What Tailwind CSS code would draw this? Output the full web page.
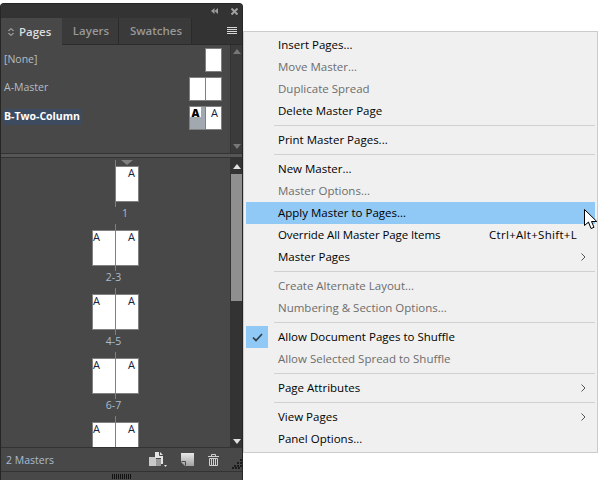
<!DOCTYPE html>
<html lang="en">
<head>
    <meta charset="UTF-8">
    <title>Pages panel menu</title>
    <script src="https://cdn.jsdelivr.net/npm/@tailwindcss/browser@4"></script>
</head>
<body class="bg-white">
<div class="flex w-[601px] h-[482px] items-start overflow-hidden font-['Open_Sans',sans-serif]">

    <!-- Pages panel -->
    <div class="mt-[3px] flex h-[477px] w-[243px] shrink-0 flex-col overflow-hidden rounded-t-[4px] border-x border-t border-[#262626] bg-[#484848]">
        <!-- title bar -->
        <div class="flex h-[14px] shrink-0 items-center justify-end gap-[13px] bg-[#333333] pr-[4px]">
            <svg width="7" height="6" viewBox="0 0 7 6" fill="#9c9c9c"><path d="M3.500 0v6L0 3zM7 0v6L3.500 3z"/></svg>
            <svg width="7" height="7" viewBox="0 0 7 7" stroke="#a0a0a0" stroke-width="2"><path d="M0.500 0.500l6 6M6.500 0.500l-6 6"/></svg>
        </div>
        <!-- tabs -->
        <div class="flex h-[27px] shrink-0 border-b border-[#2b2b2b] bg-[#333333] text-[11.500px] font-semibold">
            <div class="flex h-[27px] w-[61px] items-center gap-[5px] bg-[#484848] pl-[7px] text-[#dcdcdc]">
                <svg width="6" height="10" viewBox="0 0 6 10" fill="none" stroke="#d0d0d0"><path d="M0.500 4L3 1.500 5.500 4M0.500 6L3 8.500 5.500 6"/></svg>
                <span>Pages</span>
            </div>
            <div class="flex w-[57px] items-center justify-center border-r border-[#2b2b2b] bg-[#3a3a3a] pl-[2px] text-[#989898]">Layers</div>
            <div class="flex w-[73px] items-center justify-center border-r border-[#2b2b2b] bg-[#3a3a3a] pl-[2px] text-[#989898]">Swatches</div>
            <div class="flex flex-1 items-center justify-end pr-[5px]">
                <svg width="10" height="8" viewBox="0 0 10 8" fill="#d8d8d8"><path d="M0 0h10v1H0zM0 2h10v1H0zM0 4h10v1H0zM0 6h10v1H0z"/></svg>
            </div>
        </div>

        <!-- masters -->
        <div class="flex h-[108px] shrink-0">
            <div class="flex-1 pl-[3px] pr-[8px] pt-[3px] text-[10.500px]">
                <div class="flex h-[29px] items-start justify-between">
                    <span class="mt-[4px] text-[#b4bcc4]">[None]</span>
                    <div class="h-[24px] w-[17px] border border-[#808080] bg-white"></div>
                </div>
                <div class="flex h-[29px] items-start justify-between">
                    <span class="mt-[3px] text-[#b4bcc4]">A-Master</span>
                    <div class="flex h-[24px] w-[33px] border border-[#808080] bg-white">
                        <div class="w-[16px] border-r border-[#808080]"></div>
                    </div>
                </div>
                <div class="flex h-[29px] items-start justify-between">
                    <span class="mt-[3px] flex h-[16px] w-[78px] items-center whitespace-nowrap bg-[#3d4b60] text-[10.500px] font-bold text-white">B-Two-Column</span>
                    <div class="flex h-[24px] w-[33px] border border-[#808080] bg-white">
                        <div class="h-full w-[16px] border-r border-[#808080] bg-[#a2a8b0]">
                            <div class="flex h-[10px] w-[11px] items-center justify-center bg-white text-[11px] leading-none font-extrabold text-black">A</div>
                        </div>
                        <div class="flex-1 pr-[3px] text-right text-[11px] leading-[12px] font-medium text-[#15233f]">A</div>
                    </div>
                </div>
            </div>
            <!-- scrollbar -->
            <div class="flex w-[12px] flex-col items-center justify-between border-l border-[#333333] bg-[#3b3b3b] py-[4px]">
                <svg width="8" height="5" viewBox="0 0 8 5" fill="#777777"><path d="M4 0l4 5H0z"/></svg>
                <svg width="8" height="5" viewBox="0 0 8 5" fill="#777777"><path d="M4 5l4-5H0z"/></svg>
            </div>
        </div>

        <!-- divider -->
        <div class="h-[5px] shrink-0 border-y border-[#333333] bg-[#565656]"></div>

        <!-- pages -->
        <div class="flex h-[289px] shrink-0">
            <div class="relative flex-1 overflow-hidden pt-[2px] text-[10.500px] text-[#a8bccf]">
                <svg class="absolute left-[120px] top-[2px]" width="12" height="5" viewBox="0 0 12 5" fill="#808080"><path d="M0 0h12L6 5z"/></svg>

                <div class="relative h-[64px] pt-[6px]">
                    <div class="absolute left-[114px] top-0 h-[47px] w-px bg-[#808080]"></div>
                    <div class="ml-[114px] h-[36px] w-[24px] border border-[#808080] bg-white pr-[3px] text-right text-[11px] leading-[12px] font-medium text-[#15233f]">A</div>
                    <div class="ml-[114px] mt-[4px] w-[24px] pr-[4px] text-center leading-[14px]">1</div>
                </div>

                <div class="relative h-[64px] pt-[6px]">
                    <div class="relative ml-[91px] flex h-[36px] w-[47px] justify-between border border-[#808080] bg-white pr-[3px] text-[11px] leading-[12px] font-medium text-[#15233f]"><span>A</span><span>A</span></div>
                    <div class="absolute left-[114px] top-0 h-[47px] w-px bg-[#808080]"></div>
                    <div class="ml-[91px] mt-[4px] w-[47px] pr-[4px] text-center leading-[14px]">2-3</div>
                </div>

                <div class="relative h-[64px] pt-[6px]">
                    <div class="relative ml-[91px] flex h-[36px] w-[47px] justify-between border border-[#808080] bg-white pr-[3px] text-[11px] leading-[12px] font-medium text-[#15233f]"><span>A</span><span>A</span></div>
                    <div class="absolute left-[114px] top-0 h-[47px] w-px bg-[#808080]"></div>
                    <div class="ml-[91px] mt-[4px] w-[47px] pr-[4px] text-center leading-[14px]">4-5</div>
                </div>

                <div class="relative h-[64px] pt-[6px]">
                    <div class="relative ml-[91px] flex h-[36px] w-[47px] justify-between border border-[#808080] bg-white pr-[3px] text-[11px] leading-[12px] font-medium text-[#15233f]"><span>A</span><span>A</span></div>
                    <div class="absolute left-[114px] top-0 h-[47px] w-px bg-[#808080]"></div>
                    <div class="ml-[91px] mt-[4px] w-[47px] pr-[4px] text-center leading-[14px]">6-7</div>
                </div>

                <div class="relative h-[64px] pt-[6px]">
                    <div class="relative ml-[91px] flex h-[36px] w-[47px] justify-between border border-[#808080] bg-white pr-[3px] text-[11px] leading-[12px] font-medium text-[#15233f]"><span>A</span><span>A</span></div>
                    <div class="absolute left-[114px] top-0 h-[47px] w-px bg-[#808080]"></div>
                </div>
            </div>
            <!-- scrollbar -->
            <div class="flex w-[12px] flex-col border-l border-[#333333] bg-[#333333]">
                <div class="flex h-[16px] items-center justify-center">
                    <svg width="8" height="5" viewBox="0 0 8 5" fill="#e0e0e0"><path d="M4 0l4 5H0z"/></svg>
                </div>
                <div class="h-[127px] bg-[#8f8f8f]"></div>
                <div class="flex-1"></div>
                <div class="flex h-[12px] items-center justify-center">
                    <svg width="8" height="5" viewBox="0 0 8 5" fill="#e0e0e0"><path d="M4 5l4-5H0z"/></svg>
                </div>
            </div>
        </div>

        <!-- footer -->
        <div class="flex h-[25px] shrink-0 items-center border-y border-[#333333] pl-[5px] text-[10.500px] text-[#a8bccf]">
            <span class="mt-[3px] w-[48px] shrink-0 whitespace-nowrap">2 Masters</span>
            <svg class="ml-[95px] shrink-0" width="18" height="16" viewBox="0 0 18 16">
                <path d="M0 5h7v9H0z" fill="#c8c8c8"/><path d="M7 7h5v7H7z" fill="#9a9a9a"/>
                <path d="M6 0h5l3 3v9h-2V6H6z" fill="#e4e4e4"/><path d="M10.500 0v3.500h3.500" fill="none" stroke="#484848"/>
                <path d="M15 13h3l-1.500 2z" fill="#e0e0e0"/>
            </svg>
            <svg class="ml-[14px] shrink-0" width="13" height="13" viewBox="0 0 13 13">
                <defs><linearGradient id="pg" x1="0" y1="0" x2="0" y2="1"><stop offset="0" stop-color="#e8e8e8"/><stop offset="1" stop-color="#a0a0a0"/></linearGradient></defs>
                <path d="M0 0h13v13H4L0 9z" fill="url(#pg)"/>
                <path d="M0.500 8.500h4v4" fill="none" stroke="#484848"/>
            </svg>
            <svg class="ml-[14px] shrink-0" width="11" height="13" viewBox="0 0 11 13" fill="none" stroke="#d0d0d0">
                <path d="M0 3.500h11M3.500 3V1.500h4V3"/>
                <path d="M1.500 5.500h8v7h-8zM3.500 6v6M5.500 6v6M7.500 6v6"/>
            </svg>
            <svg class="ml-[13px] mt-[8px] shrink-0" width="10" height="10" viewBox="0 0 10 10" fill="#1c1c1c">
                <path d="M8 0h2v2H8zM5 3h2v2H5zM8 3h2v2H8zM2 6h2v2H2zM5 6h2v2H5zM8 6h2v2H8zM0 8h2v2H0zM3 8h2v2H3zM6 8h2v2H6z"/>
            </svg>
        </div>

        <!-- bottom grip -->
        <div class="flex flex-1 items-center justify-center">
            <svg width="20" height="5" viewBox="0 0 20 5" fill="#111111"><path d="M0 0h1v5H0zM2 0h1v5H2zM4 0h1v5H4zM6 0h1v5H6zM8 0h1v5H8zM10 0h1v5h-1zM12 0h1v5h-1zM14 0h1v5h-1zM16 0h1v5h-1zM18 0h1v5h-1z"/></svg>
        </div>
    </div>

    <!-- Flyout menu -->
    <div class="relative mt-[31px] h-[422px] w-[355px] shrink-0 border border-[#cccccc] bg-[#f0f0f0] py-[2px] pl-[2px] pr-[2px] text-[11.500px] text-black">
        <div class="flex h-[22px] items-center pl-[32px]">Insert Pages...</div>
        <div class="flex h-[22px] items-center pl-[32px] text-[#6d6d6d]">Move Master...</div>
        <div class="flex h-[22px] items-center pl-[32px] text-[#6d6d6d]">Duplicate Spread</div>
        <div class="flex h-[22px] items-center pl-[32px]">Delete Master Page</div>
        <div class="flex h-[7px] items-center pl-[28px]"><div class="h-px w-full bg-[#d0d0d0]"></div></div>
        <div class="flex h-[22px] items-center pl-[32px]">Print Master Pages...</div>
        <div class="flex h-[7px] items-center pl-[28px]"><div class="h-px w-full bg-[#d0d0d0]"></div></div>
        <div class="flex h-[22px] items-center pl-[32px]">New Master...</div>
        <div class="flex h-[22px] items-center pl-[32px] text-[#6d6d6d]">Master Options...</div>
        <div class="flex h-[22px] items-center bg-[#90c8f6] pl-[32px]">Apply Master to Pages...</div>
        <div class="flex h-[22px] items-center justify-between pl-[32px] pr-[18px]"><span class="tracking-[-0.1px]">Override All Master Page Items</span><span class="tracking-[0.3px]">Ctrl+Alt+Shift+L</span></div>
        <div class="flex h-[22px] items-center justify-between pl-[32px] pr-[9px]">
            <span>Master Pages</span>
            <svg width="5" height="8" viewBox="0 0 5 8" fill="none" stroke="#555555"><path d="M0.500 0.500L4 4 0.500 7.500"/></svg>
        </div>
        <div class="flex h-[7px] items-center pl-[28px]"><div class="h-px w-full bg-[#d0d0d0]"></div></div>
        <div class="flex h-[22px] items-center pl-[32px] text-[#6d6d6d]">Create Alternate Layout...</div>
        <div class="flex h-[22px] items-center pl-[32px] text-[#6d6d6d]">Numbering &amp; Section Options...</div>
        <div class="flex h-[7px] items-center pl-[28px]"><div class="h-px w-full bg-[#d0d0d0]"></div></div>
        <div class="flex h-[22px] items-center">
            <div class="flex h-[22px] w-[22px] items-center justify-center bg-[#90c8f6]">
                <svg width="11" height="9" viewBox="0 0 11 9" fill="none" stroke="#2f3b47" stroke-width="1.600"><path d="M1 4.500L4 7.500 10 1"/></svg>
            </div>
            <span class="pl-[10px]">Allow Document Pages to Shuffle</span>
        </div>
        <div class="flex h-[22px] items-center pl-[32px] text-[#6d6d6d]">Allow Selected Spread to Shuffle</div>
        <div class="flex h-[7px] items-center pl-[28px]"><div class="h-px w-full bg-[#d0d0d0]"></div></div>
        <div class="flex h-[22px] items-center justify-between pl-[32px] pr-[9px]">
            <span>Page Attributes</span>
            <svg width="5" height="8" viewBox="0 0 5 8" fill="none" stroke="#555555"><path d="M0.500 0.500L4 4 0.500 7.500"/></svg>
        </div>
        <div class="flex h-[7px] items-center pl-[28px]"><div class="h-px w-full bg-[#d0d0d0]"></div></div>
        <div class="flex h-[22px] items-center justify-between pl-[32px] pr-[9px]">
            <span>View Pages</span>
            <svg width="5" height="8" viewBox="0 0 5 8" fill="none" stroke="#555555"><path d="M0.500 0.500L4 4 0.500 7.500"/></svg>
        </div>
        <div class="flex h-[22px] items-center pl-[32px]">Panel Options...</div>

        <!-- mouse pointer -->
        <svg class="absolute left-[340px] top-[177px]" width="14" height="21" viewBox="0 0 14 21">
            <path d="M0.500 0.500V16.500L4.500 13 7 19.500 10 18.300 7.500 12.500H12.800z" fill="#ffffff" stroke="#000000"/>
        </svg>
    </div>
</div>
</body>
</html>
